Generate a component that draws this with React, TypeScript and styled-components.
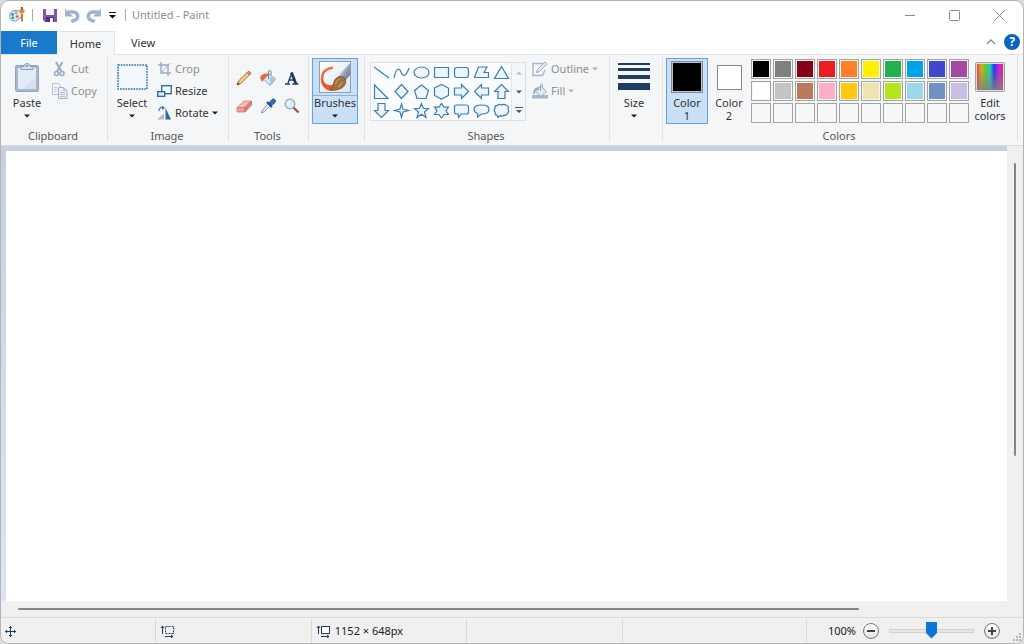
import React from 'react';
import styled, { createGlobalStyle, css } from 'styled-components';

const GlobalStyle = createGlobalStyle`
  * { box-sizing: border-box; }
  body {
    margin: 0;
    background: #dcdcdc;
    font-family: "Noto Sans", "Open Sans", sans-serif;
    font-size: 11px;
    color: #333;
  }
  button {
    font: inherit;
    color: inherit;
    background: none;
    border: 0;
    padding: 0;
    margin: 0;
  }
  svg { display: block; flex: none; }
`;

const Window = styled.main`
  display: flex;
  flex-direction: column;
  height: 100vh;
  border: 1px solid #b4b4b4;
  border-radius: 9px;
  background: #fff;
  overflow: hidden;
`;

/* Title bar */
const TitleBar = styled.header`
  display: flex;
  align-items: center;
  flex: none;
  height: 30px;
  padding: 0 1px 2px 7px;
`;
const QuickBar = styled.div`
  display: flex;
  align-items: center;
  flex: 1;
`;
const Divider = styled.span`
  width: 1px;
  height: 12px;
  margin: 0 6px;
  background: #a8a8a8;
`;
const QuickButton = styled.button<{ $narrow?: boolean }>`
  display: flex;
  justify-content: center;
  width: ${(p) => (p.$narrow ? 14 : 22)}px;
`;
const Title = styled.h1`
  margin: 0;
  font-size: 11px;
  font-weight: 400;
  line-height: 16px;
  color: #8c8c8c;
`;
const CaptionButton = styled.button`
  display: flex;
  align-items: center;
  justify-content: center;
  width: 45px;
  height: 28px;
`;

/* Tabs */
const TabRow = styled.nav`
  display: flex;
  flex: none;
  height: 24px;
  border-bottom: 1px solid #e1e3e6;
`;
const Tab = styled.button<{ $kind?: 'file' | 'active' }>`
  width: 56px;
  height: 23px;
  line-height: 22px;
  ${(p) =>
    p.$kind === 'file' &&
    css`
      background: #1979ca;
      color: #fff;
    `}
  ${(p) =>
    p.$kind === 'active' &&
    css`
      width: 58px;
      height: 24px;
      line-height: 20px;
      background: #f5f6f7;
      border: 1px solid #dfe1e4;
      border-bottom: 0;
      border-left: 0;
    `}
`;
const TabTools = styled.div`
  display: flex;
  align-items: center;
  gap: 8px;
  margin-left: auto;
  padding: 0 3px 2px 0;
`;
const HelpButton = styled.button`
  width: 16px;
  height: 16px;
  border-radius: 50%;
  background: #0a64c4;
  color: #fff;
  font-size: 12px;
  font-weight: 700;
  line-height: 16px;
`;

/* Ribbon */
const Ribbon = styled.section`
  display: flex;
  flex: none;
  padding: 1px 0 3px;
  background: #f5f6f7;
  border-bottom: 1px solid #d9dce1;
`;
const GroupBox = styled.section<{ $width: number; $pad: number }>`
  flex: none;
  width: ${(p) => p.$width}px;
  padding-top: 2px;
  padding-left: ${(p) => p.$pad}px;
  border-right: 1px solid #e2e3e4;
`;
const GroupBody = styled.div<{ $gap?: number }>`
  display: flex;
  align-items: flex-start;
  gap: ${(p) => p.$gap ?? 0}px;
  height: 66px;
`;
const GroupLabel = styled.h2<{ $pad: number }>`
  margin: 6px 0 0 -${(p) => p.$pad}px;
  padding-right: 2px;
  font-size: 11px;
  font-weight: 400;
  line-height: 12px;
  text-align: center;
  color: #555;
`;
const BigButton = styled.button<{ $width?: number; $selected?: boolean }>`
  display: flex;
  flex-direction: column;
  align-items: center;
  width: ${(p) => p.$width ?? 44}px;
  height: 66px;
  line-height: 13px;
  ${(p) =>
    p.$selected &&
    css`
      background: #c9e0f7;
      box-shadow: inset 0 0 0 1px #62a2e4;
    `}
`;
const BigIcon = styled.span<{ $line?: boolean }>`
  display: flex;
  align-items: center;
  justify-content: center;
  width: 100%;
  height: 38px;
  border-bottom: ${(p) => (p.$line ? '1px solid #7db4ea' : '0')};
`;
const ArrowLine = styled.span`
  display: flex;
  align-items: center;
  height: 13px;
`;
const SmallStack = styled.div`
  display: flex;
  flex-direction: column;
  align-items: flex-start;
`;
const SmallButton = styled.button<{ $muted?: boolean }>`
  display: flex;
  align-items: center;
  gap: 3px;
  height: 22px;
  line-height: 20px;
  color: ${(p) => (p.$muted ? '#8d8d8d' : '#333')};
`;
const ToolGrid = styled.div`
  display: grid;
  grid-template-columns: repeat(3, 24px);
  grid-auto-rows: 28px;
  padding-top: 6px;
`;
const IconButton = styled.button`
  display: flex;
  align-items: center;
  justify-content: center;
`;
const Gallery = styled.div`
  display: flex;
  width: 156px;
  margin-top: 4px;
  border: 1px solid #dcdfe3;
  background: #fbfcfe;
`;
const ShapeGrid = styled.div`
  display: grid;
  grid-template-columns: repeat(7, 20px);
  grid-auto-rows: 19px;
  flex: 1;
`;
const GalleryScroll = styled.div`
  display: grid;
  grid-template-rows: repeat(3, 1fr);
  width: 14px;
  background: #f5f6f7;
  border-left: 1px solid #e3e5e8;
`;
const CurrentColor = styled.span<{ $color: string; $size: number }>`
  width: ${(p) => p.$size}px;
  height: ${(p) => p.$size}px;
  background: ${(p) => p.$color};
  border: 1px solid #868a90;
  box-shadow: inset 0 0 0 1px ${(p) => (p.$size > 30 ? '#b9c4d2' : '#fff')};
`;
const Palette = styled.div`
  display: grid;
  grid-template-columns: repeat(10, 20px);
  grid-auto-rows: 20px;
  gap: 2px;
  padding: 1px 0 0 1px;
`;
const Swatch = styled.button<{ $color: string }>`
  border: 1px solid #a3a3a3;
  background: ${(p) => p.$color};
  box-shadow: inset 0 0 0 1px #f5f6f7;
`;

/* Work area */
const WorkArea = styled.div`
  display: grid;
  flex: 1;
  min-height: 0;
  grid-template-columns: 1fr 16px;
  grid-template-rows: 1fr 16px;
  background: #f0f0f0;
`;
const Desk = styled.div`
  display: flex;
  padding: 5px 0 0 5px;
  background: linear-gradient(#c6d0e1, #dbe5f4);
`;
const Canvas = styled.div`
  flex: 1;
  background: #fff;
`;
const VerticalBar = styled.div`
  padding: 17px 0 0 7px;
`;
const HorizontalBar = styled.div`
  padding: 7px 0 0 17px;
`;
const Thumb = styled.div<{ $vertical?: boolean }>`
  width: ${(p) => (p.$vertical ? '2px' : '85%')};
  height: ${(p) => (p.$vertical ? '67%' : '2px')};
  border-radius: 1px;
  background: #868686;
`;

/* Status bar */
const StatusBar = styled.footer`
  display: flex;
  flex: none;
  height: 26px;
  background: #f0f0f0;
  border-top: 1px solid #dadada;
  color: #222;
`;
const StatusCell = styled.div<{ $grow: number }>`
  display: flex;
  align-items: center;
  gap: 4px;
  flex: ${(p) => p.$grow} 1 0;
  padding-left: 4px;
  margin-top: 1px;
  border-right: 1px solid #d9d9d9;
  line-height: 16px;
`;
const ZoomBox = styled.div`
  display: flex;
  align-items: center;
  flex: none;
  width: 216px;
  padding-left: 21px;
`;
const ZoomText = styled.span`
  width: 35px;
  line-height: 16px;
`;
const RoundButton = styled.button`
  display: flex;
  align-items: center;
  justify-content: center;
  width: 16px;
  height: 16px;
  border: 1px solid #777;
  border-radius: 50%;
  background: linear-gradient(#fff, #e2e2e2);
`;
const ZoomRange = styled.input`
  appearance: none;
  width: 85px;
  height: 16px;
  margin: 0 10px;
  background: transparent;
  &::-webkit-slider-runnable-track {
    height: 4px;
    border: 1px solid #d0d0d0;
    background: #e7e7e7;
  }
  &::-webkit-slider-thumb {
    appearance: none;
    width: 11px;
    height: 17px;
    margin-top: -8px;
    background: #0877d5;
    clip-path: polygon(0 0, 100% 0, 100% 68%, 50% 100%, 0 68%);
  }
`;
const Grip = styled.svg`
  align-self: flex-end;
  margin: 0 2px 2px auto;
`;

/* Icons */
const Arrow = ({ color = '#1c1c1c' }: { color?: string }) => (
  <svg width="6" height="4" viewBox="0 0 6 4"><path d="M0 .5h6L3 3.5z" fill={color} /></svg>
);

const Icon = ({ size = 16, children }: { size?: number; children: React.ReactNode }) => (
  <svg width={size} height={size} viewBox={`0 0 ${size} ${size}`} fill="none">{children}</svg>
);

const PaintLogo = () => (
  <Icon size={18}>
    <path d="M1.500 10.500C1.500 6.500 4.500 4.500 8 4.500c3.500 0 6 2 6 5 0 2.500-2 3-3.500 3.200C9 13 10 15 7.500 15 4 15 1.500 13.500 1.500 10.500z" fill="#d7ebf8" stroke="#5b9cc7" />
    <circle cx="4.500" cy="8.500" r="1.400" fill="#2f8fd8" />
    <circle cx="8" cy="7" r="1.400" fill="#e9a51f" />
    <circle cx="4.800" cy="11.800" r="1.400" fill="#38a648" />
    <circle cx="9" cy="10.500" r="1.200" fill="#e2523b" />
    <path d="M14 8v7.500" stroke="#d97a26" strokeWidth="2" />
    <path d="M11.500 3.500h5v3q-2.500 2-5 0z" fill="#e98a2d" />
    <path d="M14 1v3" stroke="#a85a20" strokeWidth="2" />
  </Icon>
);
const SaveIcon = () => (
  <Icon>
    <path d="M1 2h14v13H3l-2-2z" fill="#7e58a8" />
    <path d="M4 2h8v6H4z" fill="#f3eef8" />
    <path d="M4 10h8v5H4z" fill="#4b3a68" />
    <path d="M8 11h3v4H8z" fill="#efe9f5" />
  </Icon>
);
const UndoShape = () => (
  <>
    <path d="M4 5h5.500a4 4 0 0 1 0 8.500L7.500 15" stroke="#a3b3cf" strokeWidth="3.600" />
    <path d="M1 1.500V9.500h8z" fill="#a3b3cf" />
  </>
);
const UndoIcon = () => <Icon><UndoShape /></Icon>;
const RedoIcon = () => <Icon><g transform="matrix(-1 0 0 1 16 0)"><UndoShape /></g></Icon>;

const PasteIcon = () => (
  <svg width="26" height="31" viewBox="0 0 26 31">
    <rect x="1.500" y="3.500" width="23" height="26" rx="1.500" fill="#a9b8d0" stroke="#92a2bd" />
    <rect x="4" y="6" width="18" height="21" fill="#e3ebf6" />
    <path d="M22 15v12H9z" fill="#d5e0ef" />
    <path d="M7 7.500V4.500h3a3 3 0 0 1 6 0h3v3z" fill="#d5deeb" stroke="#8e9eb9" />
    <circle cx="13" cy="4" r="1" fill="#7585a3" />
  </svg>
);
const CutIcon = () => (
  <Icon>
    <path d="M4 1l5.500 9.500M10.500 1L5 10.500" stroke="#9aabc5" strokeWidth="2" />
    <circle cx="4.500" cy="12.500" r="2" stroke="#9aabc5" strokeWidth="1.600" />
    <circle cx="10" cy="12.500" r="2" stroke="#9aabc5" strokeWidth="1.600" />
  </Icon>
);
const CopyIcon = () => (
  <Icon>
    <path d="M.5 .5h6l2 2v9h-8z" fill="#f1f5fb" stroke="#b3c1d6" />
    <path d="M2 4.500h3M2 6.500h3M2 8.500h3" stroke="#c4d0e1" />
    <path d="M6.500 4.500h5l3.500 3v8H6.500z" fill="#e8eff8" stroke="#9fb0ca" />
    <path d="M11.500 4.500v3H15M8 9.500h5M8 11.500h5M8 13.500h5" stroke="#b3c1d6" />
  </Icon>
);
const SelectIcon = () => (
  <svg width="31" height="26" viewBox="0 0 31 26">
    <rect x="1" y="1" width="29" height="24" fill="#f4f9ff" stroke="#2a70b0" strokeWidth="1.500" strokeDasharray="1.700 1" />
  </svg>
);
const CropIcon = () => (
  <Icon>
    <path d="M5 1v11h10M2 4h10v11" stroke="#9cadc6" strokeWidth="1.500" />
    <path d="M5 12L14 2" stroke="#9cadc6" />
  </Icon>
);
const ResizeIcon = () => (
  <Icon>
    <rect x="5.700" y="2.700" width="9.500" height="8" fill="#fff" stroke="#2a6dab" strokeWidth="1.400" />
    <rect x="1.700" y="8.700" width="7" height="4.600" fill="#e9f3fd" stroke="#2a6dab" strokeWidth="1.400" />
  </Icon>
);
const RotateIcon = () => (
  <Icon>
    <path d="M9.500 3v11.500H15z" fill="#1f6ba9" />
    <path d="M8 8.500v6H1z" fill="#b5b8bb" />
    <path d="M3 6q0-4 4-3.500" stroke="#2a7cc4" strokeWidth="1.300" />
    <path d="M6 .5v4.500L9 3z" fill="#2a7cc4" />
  </Icon>
);
const PencilIcon = () => (
  <Icon>
    <path d="M1 15l1.500-4L11 2.500 13.500 5l-8.500 8.500z" fill="#f0bf62" stroke="#94703f" strokeWidth=".8" />
    <path d="M11 2.500l1-1q1-.5 2 .5t.5 2l-1 1z" fill="#e58e85" stroke="#a25f55" strokeWidth=".8" />
    <path d="M4 12l8-8" stroke="#fce4a1" />
    <path d="M1 15l.8-2.500 1.700 1.700z" fill="#333" />
  </Icon>
);
const FillToolIcon = () => (
  <Icon>
    <path d="M8.500 3.500l7 5.500-5.500 6.500-6-6z" fill="#d9e9f6" stroke="#7c9dbe" />
    <path d="M10 6l4.500 3.500-4.500 5z" fill="#a6c8e6" />
    <path d="M8.500 9V2q0-1.500 1.200-1.500T11 2v3" stroke="#657a91" strokeWidth=".9" />
    <path d="M8 3.500Q2 3 0 7.500l1.500 3.500q1 1 2-.5L4 8.500 8.500 5z" fill="#e3683a" />
  </Icon>
);
const TextToolIcon = () => (
  <Icon>
    <path d="M4 13L8 2.500M5.500 10h5" stroke="#1b3b66" strokeWidth="1.400" />
    <path d="M7.500 2.500L12 14" stroke="#1b3b66" strokeWidth="2.800" />
    <path d="M1 14h5M8.500 14h6" stroke="#1b3b66" strokeWidth="1.400" />
  </Icon>
);
const EraserIcon = () => (
  <Icon>
    <path d="M1 9.500L8 3h7.500L9 9.500z" fill="#f5bcb5" stroke="#c97c75" strokeWidth=".8" />
    <path d="M1 9.500h8V14H1z" fill="#f0a098" stroke="#c97c75" strokeWidth=".8" />
    <path d="M9 9.500L15.500 3v4L9 14z" fill="#df827b" stroke="#bc6a63" strokeWidth=".8" />
  </Icon>
);
const PickerIcon = () => (
  <Icon>
    <path d="M1.500 15l1-3L8.500 5.500l2 2-6 6z" fill="#e2effa" stroke="#7d9cb8" />
    <path d="M7 4l5 5" stroke="#174a85" strokeWidth="2" />
    <path d="M9 5l3-3.500q1.500-1 2.800 .2t.2 2.800L11.500 7.500z" fill="#2872b8" stroke="#1a528c" />
  </Icon>
);
const MagnifierIcon = () => (
  <Icon>
    <path d="M9.500 9.500l5 5" stroke="#87614f" strokeWidth="2.400" />
    <circle cx="6" cy="6" r="4.800" fill="#d9edfb" stroke="#97a5b4" strokeWidth="1.300" />
    <path d="M3.500 6Q4 3.500 6.500 3.500" stroke="#fff" strokeWidth="1.400" />
  </Icon>
);
const BrushIcon = () => (
  <svg width="32" height="32" viewBox="0 0 32 32" fill="none">
    <defs>
      <linearGradient id="brushBack" x1="0" y1="0" x2="1" y2="1">
        <stop offset="0" stopColor="#fff" /><stop offset="1" stopColor="#d9e4f0" />
      </linearGradient>
      <linearGradient id="ferrule" x1="0" y1="0" x2="1" y2="1">
        <stop offset=".2" stopColor="#dfe6ee" /><stop offset=".5" stopColor="#9aa8ba" /><stop offset="1" stopColor="#56657a" />
      </linearGradient>
    </defs>
    <rect x=".5" y=".5" width="31" height="31" fill="url(#brushBack)" stroke="#8fa0b3" />
    <path d="M14 6.500Q5 8 3.500 14 2 21 6 26" stroke="#ec6c43" strokeWidth="2.600" />
    <path d="M2.500 18q0 9 7 11.500 5 1 9-1l-3-5q-6 2-9-1-2-2-4-4.500z" fill="#e85a2c" />
    <path d="M31 3v11l-5 6-6-6L30 3z" fill="url(#ferrule)" />
    <path d="M11 29q3-3 3.500-7 1-5 5.500-6.500 4-1 6 2 2 4-1 7.500-4 5-14 4z" fill="#a0713f" stroke="#6d4a25" strokeWidth=".7" />
    <path d="M16.500 23q1-4 4.500-5M19 26q3-2 4-5" stroke="#c59b66" strokeWidth="1.200" />
  </svg>
);
const OutlineIcon = () => (
  <Icon>
    <path d="M12 2.500H1v12h9.500L13 9" stroke="#a6b6ce" strokeWidth="1.400" />
    <path d="M4.500 11.500l1-3L13 1l2 2-7.500 7.500z" fill="#e3eaf4" stroke="#98aac5" />
  </Icon>
);
const FillIcon = () => (
  <Icon>
    <path d="M0 12h16v3.500H0z" fill="#a3b5d0" />
    <path d="M8.500 3l6 5.500-5.500 5-6-5.500z" fill="#e4ebf5" stroke="#98aac5" />
    <path d="M8.500 8V1.500q1-1.500 2 0V4" stroke="#98aac5" />
    <path d="M7 4Q1 4 1 11h2q0-4 4-4z" fill="#98adcc" />
  </Icon>
);
const SizeIcon = () => (
  <svg width="32" height="29" viewBox="0 0 32 29" fill="#1f3d63">
    <path d="M0 0h32v2H0zM0 5h32v3H0zM0 12h32v4H0zM0 20h32v7H0z" />
  </svg>
);
const SpectrumIcon = () => (
  <svg width="30" height="30" viewBox="0 0 30 30">
    <defs>
      <linearGradient id="hue">
        <stop offset="0" stopColor="#e8442c" /><stop offset=".15" stopColor="#e9a12a" />
        <stop offset=".36" stopColor="#49d431" /><stop offset=".5" stopColor="#20cfc0" />
        <stop offset=".66" stopColor="#2637ea" /><stop offset=".84" stopColor="#c91fe0" />
        <stop offset="1" stopColor="#ee2670" />
      </linearGradient>
      <linearGradient id="shade" x1="0" y1="0" x2="0" y2="1">
        <stop offset=".2" stopColor="#808080" stopOpacity="0" /><stop offset="1" stopColor="#808080" stopOpacity=".85" />
      </linearGradient>
    </defs>
    <rect x=".5" y=".5" width="29" height="29" rx="1" fill="#dadada" stroke="#a3a3a3" />
    <path d="M2 2h26v26H2z" fill="url(#hue)" />
    <path d="M2 2h26v26H2z" fill="url(#shade)" />
  </svg>
);

const shapes: [string, string][] = [
  ['Line', 'M1 3l15 11'],
  ['Curve', 'M1 14C3 4 6 3 8 8s5 5 8-4'],
  ['Oval', 'M1 8.500a7.500 5.500 0 1 0 15 0a7.500 5.500 0 1 0-15 0z'],
  ['Rectangle', 'M1.500 3.500h14v10h-14z'],
  ['Rounded rectangle', 'M4 3.500h9q2.500 0 2.500 2.500v5q0 2.500-2.500 2.500H4q-2.500 0-2.500-2.500V6Q1.500 3.500 4 3.500z'],
  ['Polygon', 'M5.500 3h8.500l-3 5.500h4.500v5H1.500z'],
  ['Triangle', 'M8.500 2.500l7 12h-14z'],
  ['Right triangle', 'M1.500 2v13.500H15z'],
  ['Diamond', 'M8.500 1.500l6.500 7-6.500 7-6.500-7z'],
  ['Pentagon', 'M8.500 2l7 5.500-2.500 8H4l-2.500-8z'],
  ['Hexagon', 'M8.500 1.500l7 3.500v7.500l-7 3.500-7-3.500V5z'],
  ['Right arrow', 'M1.500 5h7v-3.500l7 7-7 7V12h-7z'],
  ['Left arrow', 'M15.500 5h-7v-3.500l-7 7 7 7V12h7z'],
  ['Up arrow', 'M5 15.500v-7h-3.500l7-7 7 7H12v7z'],
  ['Down arrow', 'M5 1.500v7h-3.500l7 7 7-7H12v-7z'],
  ['Four-point star', 'M8.500 2l1.500 5 5.500 1.500L10 10l-1.500 5.500L7 10 1.500 8.500 7 7z'],
  ['Five-point star', 'M8.500 1.500l2 5h5l-4 3.500 1.500 5.500-4.500-3.200L4 15.500 5.500 10l-4-3.500h5z'],
  ['Six-point star', 'M8.500 1.500L11 5.200h4.500L13 9l2.500 3.500H11l-2.500 3.500L6 12.500H1.500L4 9 1.500 5.200H6z'],
  ['Rounded callout', 'M3.500 3h10q2 0 2 2v5q0 2-2 2H8l-2.500 3.500L5 12H3.500q-2 0-2-2V5q0-2 2-2z'],
  ['Oval callout', 'M4.500 11.500q-3.500-1.500-3.500-4 0-4.500 7.500-4.500t7.500 4.500-7.500 4.500l-4 3z'],
  ['Cloud callout', 'M4 13q-2.500 0-1.700-2.500-2-2-.3-4Q1.500 3 4.500 3.500q2-2 4-.5 3-1.500 5 .5 3 1 1.500 3.500 1.500 3-.5 4-.5 3-3.500 2.200Q8.500 15 7 13.500L5 15.500z'],
];

const palette = [
  '#000000', '#7f7f7f', '#880015', '#ed1c24', '#ff7f27', '#fff200', '#22b14c', '#00a2e8', '#3f48cc', '#a349a4',
  '#ffffff', '#c3c3c3', '#b97a57', '#ffaec9', '#ffc90e', '#efe4b0', '#b5e61d', '#99d9ea', '#7092be', '#c8bfe7',
  ...Array(10).fill('#f5f6f7'),
];

const tools: [string, React.FC][] = [
  ['Pencil', PencilIcon], ['Fill with color', FillToolIcon], ['Text', TextToolIcon],
  ['Eraser', EraserIcon], ['Color picker', PickerIcon], ['Magnifier', MagnifierIcon],
];

function Group(props: { label?: string; width: number; pad: number; gap?: number; children: React.ReactNode }) {
  return (
    <GroupBox $width={props.width} $pad={props.pad}>
      <GroupBody $gap={props.gap}>{props.children}</GroupBody>
      {props.label && <GroupLabel $pad={props.pad}>{props.label}</GroupLabel>}
    </GroupBox>
  );
}

export default function App() {
  return (
    <Window>
      <GlobalStyle />
      <TitleBar>
        <QuickBar>
          <PaintLogo />
          <Divider />
          <QuickButton aria-label="Save"><SaveIcon /></QuickButton>
          <QuickButton aria-label="Undo"><UndoIcon /></QuickButton>
          <QuickButton aria-label="Redo"><RedoIcon /></QuickButton>
          <QuickButton $narrow aria-label="Customize quick access">
            <svg width="7" height="7" viewBox="0 0 7 7"><path d="M0 0h7v1H0zM0 3h7L3.500 6.500z" fill="#111" /></svg>
          </QuickButton>
          <Divider />
          <Title>Untitled - Paint</Title>
        </QuickBar>
        <CaptionButton aria-label="Minimize">
          <svg width="10" height="10" viewBox="0 0 10 10"><path d="M0 5.500h10" stroke="#888" /></svg>
        </CaptionButton>
        <CaptionButton aria-label="Maximize">
          <svg width="11" height="11" viewBox="0 0 11 11"><rect x=".5" y=".5" width="10" height="10" rx="1" fill="none" stroke="#888" /></svg>
        </CaptionButton>
        <CaptionButton aria-label="Close">
          <svg width="11" height="11" viewBox="0 0 11 11"><path d="M.5 .5l10 10M10.500 .5l-10 10" stroke="#888" /></svg>
        </CaptionButton>
      </TitleBar>

      <TabRow>
        <Tab $kind="file">File</Tab>
        <Tab $kind="active">Home</Tab>
        <Tab>View</Tab>
        <TabTools>
          <IconButton aria-label="Collapse the ribbon">
            <svg width="10" height="6" viewBox="0 0 10 6"><path d="M1 5l4-4 4 4" fill="none" stroke="#8c8c8c" strokeWidth="1.300" /></svg>
          </IconButton>
          <HelpButton aria-label="Help">?</HelpButton>
        </TabTools>
      </TabRow>

      <Ribbon>
        <Group label="Clipboard" width={107} pad={4} gap={3}>
          <BigButton>
            <BigIcon><PasteIcon /></BigIcon>Paste<ArrowLine><Arrow /></ArrowLine>
          </BigButton>
          <SmallStack>
            <SmallButton $muted><CutIcon />Cut</SmallButton>
            <SmallButton $muted><CopyIcon />Copy</SmallButton>
          </SmallStack>
        </Group>
        <Group label="Image" width={121} pad={2} gap={2}>
          <BigButton>
            <BigIcon><SelectIcon /></BigIcon>Select<ArrowLine><Arrow /></ArrowLine>
          </BigButton>
          <SmallStack>
            <SmallButton $muted><CropIcon />Crop</SmallButton>
            <SmallButton><ResizeIcon />Resize</SmallButton>
            <SmallButton><RotateIcon />Rotate<Arrow /></SmallButton>
          </SmallStack>
        </Group>
        <Group label="Tools" width={80} pad={3}>
          <ToolGrid>
            {tools.map(([name, Tool]) => (
              <IconButton key={name} aria-label={name}><Tool /></IconButton>
            ))}
          </ToolGrid>
        </Group>
        <Group width={56} pad={3}>
          <BigButton $width={46} $selected>
            <BigIcon $line><BrushIcon /></BigIcon>Brushes<ArrowLine><Arrow /></ArrowLine>
          </BigButton>
        </Group>
        <Group label="Shapes" width={245} pad={5} gap={6}>
          <Gallery>
            <ShapeGrid>
              {shapes.map(([name, d]) => (
                <IconButton key={name} aria-label={name}>
                  <svg width="17" height="17" viewBox="0 0 17 17">
                    <path d={d} fill={name === 'Line' || name === 'Curve' ? 'none' : '#edf6fd'} stroke="#3a7db8" strokeWidth="1.200" />
                  </svg>
                </IconButton>
              ))}
            </ShapeGrid>
            <GalleryScroll>
              <IconButton aria-label="Previous row"><svg width="6" height="4" viewBox="0 0 6 4"><path d="M0 3.500h6L3 .5z" fill="#b5bac2" /></svg></IconButton>
              <IconButton aria-label="Next row"><Arrow color="#44546b" /></IconButton>
              <IconButton aria-label="All shapes"><svg width="8" height="7" viewBox="0 0 8 7"><path d="M0 0h8v1H0zM1 3h6L4 6z" fill="#44546b" /></svg></IconButton>
            </GalleryScroll>
          </Gallery>
          <SmallStack>
            <SmallButton $muted><OutlineIcon />Outline<Arrow color="#b0b0b0" /></SmallButton>
            <SmallButton $muted><FillIcon />Fill<Arrow color="#b0b0b0" /></SmallButton>
          </SmallStack>
        </Group>
        <Group width={53} pad={2}>
          <BigButton>
            <BigIcon><SizeIcon /></BigIcon>Size<ArrowLine><Arrow /></ArrowLine>
          </BigButton>
        </Group>
        <Group label="Colors" width={355} pad={3}>
          <BigButton $width={42} $selected>
            <BigIcon><CurrentColor $color="#000" $size={32} /></BigIcon>
            <span>Color</span><span>1</span>
          </BigButton>
          <BigButton $width={42}>
            <BigIcon><CurrentColor $color="#fff" $size={25} /></BigIcon>
            <span>Color</span><span>2</span>
          </BigButton>
          <Palette>
            {palette.map((c, i) => <Swatch key={i} $color={c} aria-label={`Color ${i + 1}`} />)}
          </Palette>
          <BigButton $width={42}>
            <BigIcon><SpectrumIcon /></BigIcon>
            <span>Edit</span><span>colors</span>
          </BigButton>
        </Group>
      </Ribbon>

      <WorkArea>
        <Desk><Canvas /></Desk>
        <VerticalBar><Thumb $vertical /></VerticalBar>
        <HorizontalBar><Thumb /></HorizontalBar>
      </WorkArea>

      <StatusBar>
        <StatusCell $grow={155}>
          <svg width="11" height="11" viewBox="0 0 11 11" fill="none" stroke="#1f3d63">
            <path d="M5.500 0v11M0 5.500h11" />
            <path d="M4 2l1.500-1.500L7 2M4 9l1.500 1.500L7 9M2 4L.5 5.500 2 7M9 4l1.500 1.500L9 7" />
          </svg>
        </StatusCell>
        <StatusCell $grow={155}>
          <svg width="15" height="13" viewBox="0 0 15 13" fill="none" stroke="#1f3d63">
            <path d="M2.500 1v8M1 3l1.500-2L4 3M5 11.500h8M11 10l2 1.500-2 1.500" />
            <rect x="5.500" y="1.500" width="8" height="7" strokeDasharray="2 1" />
          </svg>
        </StatusCell>
        <StatusCell $grow={155}>
          <svg width="15" height="13" viewBox="0 0 15 13" fill="none" stroke="#1f3d63">
            <path d="M2.500 1v8M1 3l1.500-2L4 3M5 11.500h8M11 10l2 1.500-2 1.500" />
            <rect x="5.500" y="1.500" width="8" height="7" fill="#fff" />
          </svg>
          1152 × 648px
        </StatusCell>
        <StatusCell $grow={155} />
        <StatusCell $grow={185} />
        <ZoomBox>
          <ZoomText>100%</ZoomText>
          <RoundButton aria-label="Zoom out">
            <svg width="8" height="8" viewBox="0 0 8 8"><path d="M0 3h8v2H0z" fill="#444" /></svg>
          </RoundButton>
          <ZoomRange type="range" aria-label="Zoom" min={0} max={100} defaultValue={50} />
          <RoundButton aria-label="Zoom in">
            <svg width="8" height="8" viewBox="0 0 8 8"><path d="M0 3h3V0h2v3h3v2H5v3H3V5H0z" fill="#444" /></svg>
          </RoundButton>
          <Grip width="8" height="8" viewBox="0 0 8 8" fill="#b5b5b5">
            <path d="M6 0h2v2H6zM3 3h2v2H3zM6 3h2v2H6zM0 6h2v2H0zM3 6h2v2H3zM6 6h2v2H6z" />
          </Grip>
        </ZoomBox>
      </StatusBar>
    </Window>
  );
}
